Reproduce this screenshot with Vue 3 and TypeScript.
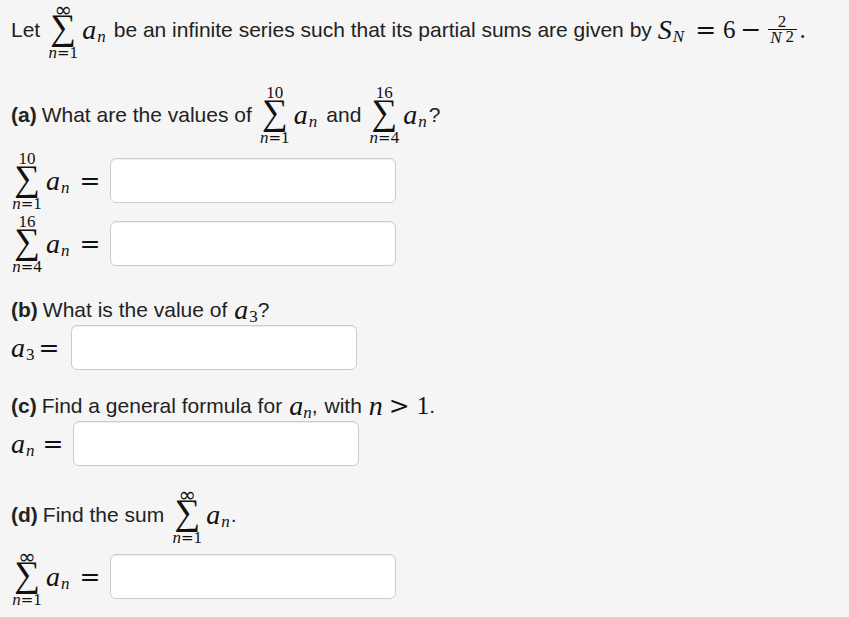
<script setup lang="ts">
// limits for the sums next to the answer boxes
const firstSum = { top: "10", bottom: "1" };
const secondSum = { top: "16", bottom: "4" };
</script>

<template>
  <main class="page">
    <p class="line intro">
      <span>Let</span>
      <span class="sum"><span class="lim inf">∞</span><span class="sigma">∑</span><span class="lim low"><i>n</i><span class="op">=</span>1</span></span>
      <span class="math after-sum"><i>a</i><sub><i>n</i></sub></span>
      <span>be an infinite series such that its partial sums are given by</span>
      <span class="math sn"><i>S</i><sub><i>N</i></sub></span>
      <span class="op big">=</span>
      <span class="digit">6</span>
      <span class="op big minus">−</span>
      <span class="frac"><span class="num">2</span><span class="den"><i>N</i><span class="sup">2</span></span></span>
      <span class="dot">.</span>
    </p>

    <p class="line part-a">
      <b>(a)</b>
      <span>What are the values of</span>
      <span class="sum"><span class="lim">10</span><span class="sigma">∑</span><span class="lim low"><i>n</i><span class="op">=</span>1</span></span>
      <span class="math after-sum"><i>a</i><sub><i>n</i></sub></span>
      <span>and</span>
      <span class="sum"><span class="lim">16</span><span class="sigma">∑</span><span class="lim low"><i>n</i><span class="op">=</span>4</span></span>
      <span class="math after-sum"><i>a</i><sub><i>n</i></sub></span>
      <span class="stuck">?</span>
    </p>

    <div class="answer answer-first">
      <span class="sum"><span class="lim">{{ firstSum.top }}</span><span class="sigma">∑</span><span class="lim low"><i>n</i><span class="op">=</span>{{ firstSum.bottom }}</span></span>
      <span class="math after-sum"><i>a</i><sub><i>n</i></sub></span>
      <span class="op big">=</span>
      <input class="field" type="text" />
    </div>
    <div class="answer">
      <span class="sum"><span class="lim">{{ secondSum.top }}</span><span class="sigma">∑</span><span class="lim low"><i>n</i><span class="op">=</span>{{ secondSum.bottom }}</span></span>
      <span class="math after-sum"><i>a</i><sub><i>n</i></sub></span>
      <span class="op big">=</span>
      <input class="field" type="text" />
    </div>

    <p class="line part-b">
      <b>(b)</b>
      <span>What is the value of</span>
      <span class="math"><i>a</i><sub>3</sub></span>
      <span class="stuck">?</span>
    </p>
    <div class="answer plain three">
      <span class="math"><i>a</i><sub>3</sub></span>
      <span class="op big">=</span>
      <input class="field" type="text" />
    </div>

    <p class="line part-c">
      <b>(c)</b>
      <span>Find a general formula for</span>
      <span class="math"><i>a</i><sub><i>n</i></sub></span>
      <span class="stuck">,</span>
      <span>with</span>
      <span class="math"><i>n</i></span>
      <span class="op big">&gt;</span>
      <span class="digit">1</span>
      <span class="stuck">.</span>
    </p>
    <div class="answer plain">
      <span class="math"><i>a</i><sub><i>n</i></sub></span>
      <span class="op big">=</span>
      <input class="field" type="text" />
    </div>

    <p class="line part-d">
      <b>(d)</b>
      <span>Find the sum</span>
      <span class="sum"><span class="lim inf">∞</span><span class="sigma">∑</span><span class="lim low"><i>n</i><span class="op">=</span>1</span></span>
      <span class="math after-sum"><i>a</i><sub><i>n</i></sub></span>
      <span class="stuck">.</span>
    </p>
    <div class="answer answer-last">
      <span class="sum"><span class="lim inf">∞</span><span class="sigma">∑</span><span class="lim low"><i>n</i><span class="op">=</span>1</span></span>
      <span class="math after-sum"><i>a</i><sub><i>n</i></sub></span>
      <span class="op big">=</span>
      <input class="field" type="text" />
    </div>
  </main>
</template>

<style>
body {
  background: #f5f5f5;
}
</style>

<style scoped>
.page {
  height: 617px;
  box-sizing: border-box;
  padding-left: 11px;
  overflow: hidden;
  background: #f5f5f5;
  color: #222;
  font-family: "Liberation Sans", Arial, sans-serif;
  font-size: 21px;
}

.line {
  margin: 0;
  display: flex;
  align-items: center;
  gap: 7px;
  white-space: nowrap;
}

.line b {
  margin-right: -2px;
}

.intro {
  height: 60px;
}

.part-a {
  height: 64px;
  margin-top: 23px;
}

.part-a .after-sum {
  margin-right: 1px;
}

.part-b,
.part-c {
  height: 24px;
}

.part-b {
  margin-top: 32px;
}

.part-c {
  margin-top: 24px;
}

.part-c .math i {
  margin-right: 0;
}

.part-c .big {
  margin-left: -1px;
}

.part-d {
  height: 64px;
  margin-top: 17px;
}

.answer {
  display: flex;
  align-items: center;
  gap: 7px;
  height: 45px;
  margin-top: 18px;
}

.answer .after-sum {
  margin-right: 2px;
}

.answer-first {
  margin-top: 11px;
}

.answer-last {
  margin-top: 7px;
}

.plain {
  margin-top: 3px;
}

.three .big {
  margin-left: -3px;
}

.three .field {
  margin-left: 5px;
}

.sum {
  display: inline-flex;
  flex-direction: column;
  align-items: center;
  width: 32px;
  height: 60px;
  font-family: "Liberation Serif", serif;
  color: #111;
}

.lim {
  height: 14px;
  margin-top: 1px;
  margin-bottom: -1px;
  font-size: 17px;
  line-height: 14px;
}

.inf {
  margin-top: 3px;
  margin-bottom: -3px;
  font-family: "DejaVu Sans", sans-serif;
  font-size: 21px;
}

.sigma {
  height: 30px;
  margin-top: -2px;
  margin-bottom: 2px;
  font-size: 36px;
  line-height: 30px;
}

.low {
  margin-top: 2px;
  margin-bottom: 0;
}

.math {
  font-family: "Liberation Serif", serif;
  font-size: 28px;
  line-height: 24px;
  color: #111;
}

.math i {
  margin-right: 1px;
}

.math sub {
  font-size: 17px;
  line-height: 0;
  vertical-align: -3px;
}

.after-sum {
  margin-left: -4px;
}

.sn {
  margin-left: -1px;
  margin-right: 3px;
}

.op {
  font-family: "DejaVu Serif", serif;
  font-size: 15px;
}

.big {
  font-size: 25px;
  line-height: 24px;
  color: #111;
}

.minus {
  margin-left: -2px;
  margin-right: -1px;
}

.digit {
  font-family: "Liberation Serif", serif;
  font-size: 25px;
  color: #111;
}

.stuck {
  margin-left: -7px;
}

.field {
  box-sizing: border-box;
  width: 286px;
  height: 45px;
  margin-left: 3px;
  background: #fff;
  border: 1px solid #ccc;
  border-radius: 6px;
  box-shadow: inset 0 1px 1px rgba(0, 0, 0, 0.075);
}

.frac {
  display: inline-flex;
  flex-direction: column;
  align-items: center;
  width: 29px;
  font-family: "Liberation Serif", serif;
  font-size: 17px;
  line-height: 14px;
  color: #111;
}

.num {
  width: 100%;
  text-align: center;
  border-bottom: 1px solid #111;
}

.sup {
  margin-left: 4px;
  vertical-align: 1px;
}

.dot {
  margin-left: -4px;
  font-family: "Liberation Serif", serif;
  font-size: 25px;
}
</style>
